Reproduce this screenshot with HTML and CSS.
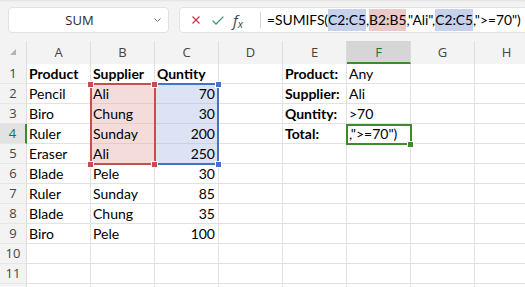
FILE: index.html
```html
<!DOCTYPE html>
<html>
<head>
<meta charset="utf-8">
<link rel="stylesheet" href="styles.css">
</head>
<body>
<div class="app">
  <div class="topbar">
    <div class="namebox">
      <span class="nb-text">SUM</span>
      <svg class="chev" width="7" height="4" viewBox="0 0 7 4"><path d="M0.5 0.5 L3.5 3.5 L6.5 0.5" fill="none" stroke="#777" stroke-width="1"/></svg>
    </div>
    <div class="fbar">
      <svg class="ic-x" width="8" height="8" viewBox="0 0 8 8"><path d="M0.5 0.5 L7.5 7.5 M7.5 0.5 L0.5 7.5" stroke="#c43a4e" stroke-width="1.3" fill="none"/></svg>
      <svg class="ic-check" width="12" height="9" viewBox="0 0 12 9"><path d="M0.6 4.6 L4 8 L11.4 0.6" stroke="#3a9a72" stroke-width="1.3" fill="none"/></svg>
      <span class="fx"><span class="fx-f">f</span><span class="fx-x">x</span></span>
      <span class="sep"></span>
      <div class="formula">=SUMIFS(<span class="hl hl-blue">C2:C5</span>,<span class="hl hl-red">B2:B5</span>,"Ali",<span class="hl hl-blue">C2:C5</span>,"&gt;=70")</div>
    </div>
  </div>

  <div class="sheet">
    <div class="corner"><svg class="tri" width="6" height="6" viewBox="0 0 6 6"><polygon points="6,0 6,6 0,6" fill="#b3b3b3"/></svg></div>
    <div class="ch">A</div><div class="ch">B</div><div class="ch">C</div><div class="ch">D</div><div class="ch">E</div><div class="ch ch-sel">F</div><div class="ch">G</div><div class="ch">H</div>

    <div class="rh">1</div>
    <div class="c b">Product</div><div class="c b">Supplier</div><div class="c b">Quntity</div><div class="c"></div><div class="c b">Product:</div><div class="c">Any</div><div class="c"></div><div class="c"></div>

    <div class="rh">2</div>
    <div class="c">Pencil</div><div class="c red">Ali</div><div class="c blue n">70</div><div class="c"></div><div class="c b">Supplier:</div><div class="c">Ali</div><div class="c"></div><div class="c"></div>

    <div class="rh">3</div>
    <div class="c">Biro</div><div class="c red">Chung</div><div class="c blue n">30</div><div class="c"></div><div class="c b">Quntity:</div><div class="c">&gt;70</div><div class="c"></div><div class="c"></div>

    <div class="rh rh-sel">4</div>
    <div class="c">Ruler</div><div class="c red">Sunday</div><div class="c blue n">200</div><div class="c"></div><div class="c b">Total:</div><div class="c">,"&gt;=70")</div><div class="c"></div><div class="c"></div>

    <div class="rh">5</div>
    <div class="c">Eraser</div><div class="c red">Ali</div><div class="c blue n">250</div><div class="c"></div><div class="c"></div><div class="c"></div><div class="c"></div><div class="c"></div>

    <div class="rh">6</div>
    <div class="c">Blade</div><div class="c">Pele</div><div class="c n">30</div><div class="c"></div><div class="c"></div><div class="c"></div><div class="c"></div><div class="c"></div>

    <div class="rh">7</div>
    <div class="c">Ruler</div><div class="c">Sunday</div><div class="c n">85</div><div class="c"></div><div class="c"></div><div class="c"></div><div class="c"></div><div class="c"></div>

    <div class="rh">8</div>
    <div class="c">Blade</div><div class="c">Chung</div><div class="c n">35</div><div class="c"></div><div class="c"></div><div class="c"></div><div class="c"></div><div class="c"></div>

    <div class="rh">9</div>
    <div class="c">Biro</div><div class="c">Pele</div><div class="c n">100</div><div class="c"></div><div class="c"></div><div class="c"></div><div class="c"></div><div class="c"></div>

    <div class="rh">10</div>
    <div class="c"></div><div class="c"></div><div class="c"></div><div class="c"></div><div class="c"></div><div class="c"></div><div class="c"></div><div class="c"></div>

    <div class="rh">11</div>
    <div class="c"></div><div class="c"></div><div class="c"></div><div class="c"></div><div class="c"></div><div class="c"></div><div class="c"></div><div class="c"></div>

    <div class="rh"></div>
    <div class="c"></div><div class="c"></div><div class="c"></div><div class="c"></div><div class="c"></div><div class="c"></div><div class="c"></div><div class="c"></div>

    <div class="range range-blue"></div>
    <div class="range range-red"></div>
    <div class="handle h-blue hb1"></div>
    <div class="handle h-blue hb2"></div>
    <div class="handle h-red hr1"></div>
    <div class="handle h-red hr2"></div>
    <div class="handle h-red hr3"></div>
    <div class="handle h-red hr4"></div>
    <div class="active"></div>
    <div class="fill-handle"></div>
  </div>
</div>
</body>
</html>
```

FILE: styles.css
```css
* { box-sizing: border-box; margin: 0; padding: 0; }
html, body { width: 525px; height: 287px; overflow: hidden; background: #fff; }
body { font-family: Lato, "Liberation Sans", sans-serif; }

.app { width: 525px; height: 287px; overflow: hidden; }

.topbar {
  height: 41px;
  background: #f3f3f3;
  display: flex;
  align-items: flex-start;
  gap: 10px;
  padding: 7px 0 0 8px;
  box-shadow: inset 0 2px 2px -1px rgba(0,0,0,0.08);
}

.namebox {
  width: 161px;
  height: 26px;
  flex: none;
  background: #fff;
  border: 1px solid #e2e2e2;
  border-radius: 4px;
  display: flex;
  align-items: center;
  padding-right: 7px;
}
.nb-text {
  flex: 1;
  text-align: center;
  padding-right: 4px;
  font: 13px "Open Sans", sans-serif;
  color: #262626;
}
.chev { flex: none; }

.fbar {
  flex: 1;
  margin-right: -20px;
  height: 26px;
  background: #fff;
  border: 1px solid #e2e2e2;
  border-radius: 4px 0 0 4px;
  display: flex;
  align-items: center;
  padding-left: 12px;
}
.ic-x { flex: none; margin-right: 12px; }
.ic-check { flex: none; margin-right: 9px; }
.fx {
  flex: none;
  width: 13px;
  display: flex;
  align-items: baseline;
  color: #444;
  font-family: "Open Sans", sans-serif;
  font-style: italic;
  margin-right: 14px;
}
.fx-f { font-size: 15px; }
.fx-x { font-size: 11px; position: relative; top: 2px; }
.sep { flex: none; width: 1px; height: 16px; background: #d4d4d4; margin-right: 6px; }
.formula {
  white-space: nowrap;
  font-size: 13.8px;
  color: #000;
  line-height: 22px;
}
.hl { display: inline-block; line-height: 22px; }
.hl-blue { background: #c6d2ec; }
.hl-red { background: #ebc9c7; }

.sheet {
  position: relative;
  display: grid;
  grid-template-columns: 27px repeat(8, 64px);
  grid-template-rows: 23px repeat(12, 20px);
  width: 539px;
}

.corner {
  background: #f3f3f3;
  border-right: 1px solid #dcdcdc;
  display: flex;
  padding: 8px 0 0 10px;
}
.tri { display: block; }

.ch {
  background: #f3f3f3;
  border-right: 1px solid #dcdcdc;
  text-align: center;
  font: 13px "Open Sans", sans-serif;
  line-height: 23px;
  color: #444;
}
.ch-sel {
  background: #d6d6d6;
  color: #1e7145;
  border-bottom: 2px solid #3f8a2c;
  line-height: 22px;
}

.rh {
  background: #f3f3f3;
  border-right: 1px solid #dcdcdc;
  border-bottom: 1px solid #e6e6e6;
  text-align: center;
  font: 13px "Open Sans", sans-serif;
  line-height: 19px;
  color: #444;
}
.rh-sel {
  background: #e2e2e2;
  color: #1e7145;
  border-right: 2px solid #3f8a2c;
}

.c {
  border-right: 1px solid #e1e1e1;
  border-bottom: 1px solid #e1e1e1;
  font-size: 14px;
  line-height: 18px;
  padding: 1px 0 0 2px;
  white-space: nowrap;
  color: #000;
}
.b { font-weight: bold; }
.n { text-align: right; padding-right: 3px; }
.red { background: #f4dcdb; border-color: #e6c9c8; }
.blue { background: #dce3f4; border-color: #c9d1e6; }

.range { position: absolute; border: 2px solid; }
.range-red { left: 90px; top: 42px; width: 66px; height: 82px; border-color: #c4504e; }
.range-blue { left: 154px; top: 42px; width: 65px; height: 82px; border-color: #4472c4; }

.handle { position: absolute; width: 5px; height: 5px; box-shadow: 0 0 0 1px #fff; }
.h-red { background: #c4504e; }
.h-blue { background: #4472c4; }
.hr1 { left: 88px; top: 41px; }
.hr2 { left: 152px; top: 41px; }
.hr3 { left: 88px; top: 121px; }
.hr4 { left: 152px; top: 121px; }
.hb1 { left: 216px; top: 41px; }
.hb2 { left: 216px; top: 121px; }

.active {
  position: absolute;
  left: 346px;
  top: 83px;
  width: 66px;
  height: 21px;
  border: 2px solid #3f8a2c;
}
.fill-handle {
  position: absolute;
  left: 408px;
  top: 101px;
  width: 5px;
  height: 5px;
  background: #3f8a2c;
  box-shadow: 0 0 0 1px #fff;
}
```
